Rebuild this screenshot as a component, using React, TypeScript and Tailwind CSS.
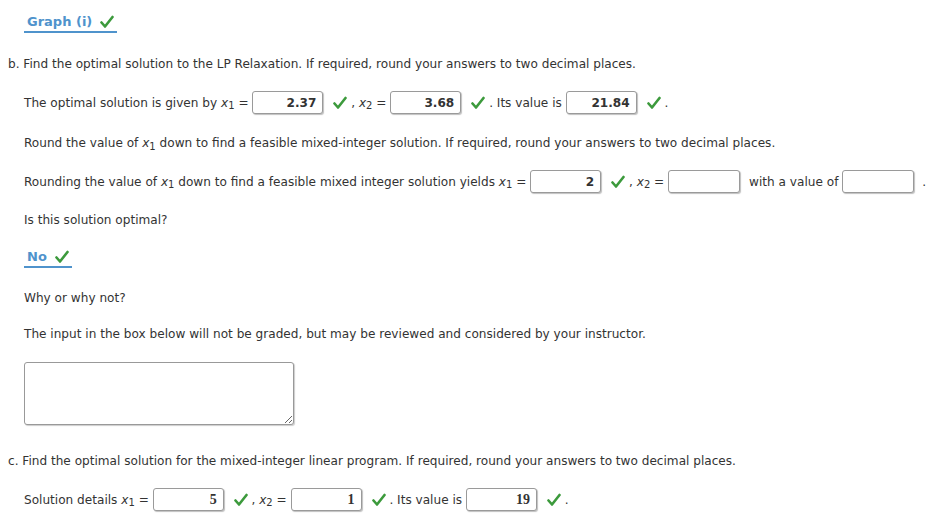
import React from 'react';

function Check() {
  return (
    <svg width="14" height="14" viewBox="0 0 14 14" className="inline-block align-middle">
      <path d="M1.5 7.5 L5 11.5 L12.5 2" fill="none" stroke="#3c9a3c" strokeWidth="2.6" strokeLinecap="round" strokeLinejoin="round" />
    </svg>
  );
}

function Box({ value, w = 'w-[71px]', serif = false }: { value?: string; w?: string; serif?: boolean }) {
  return (
    <span
      className={`inline-flex items-center justify-end ${w} h-[23px] px-[6px] border border-[#9a9a9a] rounded-[3px] shadow-[1px_1px_1px_rgba(0,0,0,0.25)] bg-white font-bold text-[#333] ${serif ? "font-['Liberation_Serif',serif] text-[14px]" : ''}`}
    >
      {value}
    </span>
  );
}

function X({ n }: { n: string }) {
  return (
    <span className="italic">
      x<sub className="not-italic text-[10px]">{n}</sub>
    </span>
  );
}

export default function App() {
  return (
    <div className="w-[930px] h-[528px] bg-white text-[#333] text-[12.1px] leading-[16px] font-['DejaVu_Sans',sans-serif] overflow-hidden">
      <div className="pt-[13px] pl-[24px]">
        <div className="inline-flex items-center gap-[8px] px-[3px] leading-[18px] border-b-2 border-[#4f93cc] font-bold text-[#4f93cc] text-[13px]">
          Graph (i) <Check />
        </div>
      </div>

      <p className="mt-[23px] pl-[8px]">b. Find the optimal solution to the LP Relaxation. If required, round your answers to two decimal places.</p>

      <div className="mt-[19px] pl-[24px] flex items-center h-[23px]">
        <span>The optimal solution is given by <X n="1" /> =&nbsp;</span>
        <Box value="2.37" />
        <span className="ml-[10px]"><Check /></span>
        <span>&nbsp;, <X n="2" /> =&nbsp;</span>
        <Box value="3.68" />
        <span className="ml-[10px]"><Check /></span>
        <span>&nbsp;. Its value is&nbsp;</span>
        <Box value="21.84" />
        <span className="ml-[10px]"><Check /></span>
        <span>&nbsp;.</span>
      </div>

      <p className="mt-[21px] pl-[24px]">Round the value of <X n="1" /> down to find a feasible mixed-integer solution. If required, round your answers to two decimal places.</p>

      <div className="mt-[19px] pl-[24px] flex items-center h-[23px]">
        <span>Rounding the value of <X n="1" /> down to find a feasible mixed integer solution yields <X n="1" /> =&nbsp;</span>
        <Box value="2" />
        <span className="ml-[10px]"><Check /></span>
        <span>&nbsp;, <X n="2" /> =&nbsp;</span>
        <Box w="w-[72px]" />
        <span className="ml-[9px]">with a value of&nbsp;</span>
        <Box w="w-[72px]" />
        <span className="ml-[8px]">.</span>
      </div>

      <p className="mt-[19px] pl-[24px]">Is this solution optimal?</p>

      <div className="mt-[20px] pl-[24px]">
        <div className="inline-flex items-center gap-[8px] px-[3px] leading-[18px] border-b-2 border-[#4f93cc] font-bold text-[#4f93cc] text-[13px]">
          No <Check />
        </div>
      </div>

      <p className="mt-[22px] pl-[24px]">Why or why not?</p>
      <p className="mt-[20px] pl-[24px]">The input in the box below will not be graded, but may be reviewed and considered by your instructor.</p>

      <div className="mt-[20px] pl-[24px]">
        <textarea className="block w-[270px] h-[63px] border border-[#999] rounded-[3px] shadow-[1px_1px_1px_rgba(0,0,0,0.2)] bg-white" />
      </div>

      <p className="mt-[28px] pl-[8px]">c. Find the optimal solution for the mixed-integer linear program. If required, round your answers to two decimal places.</p>

      <div className="mt-[19px] pl-[24px] flex items-center h-[23px]">
        <span>Solution details <X n="1" /> =&nbsp;</span>
        <Box value="5" serif />
        <span className="ml-[10px]"><Check /></span>
        <span>&nbsp;, <X n="2" /> =&nbsp;</span>
        <Box value="1" serif />
        <span className="ml-[10px]"><Check /></span>
        <span>&nbsp;. Its value is&nbsp;</span>
        <Box value="19" serif />
        <span className="ml-[10px]"><Check /></span>
        <span>&nbsp;.</span>
      </div>
    </div>
  );
}
